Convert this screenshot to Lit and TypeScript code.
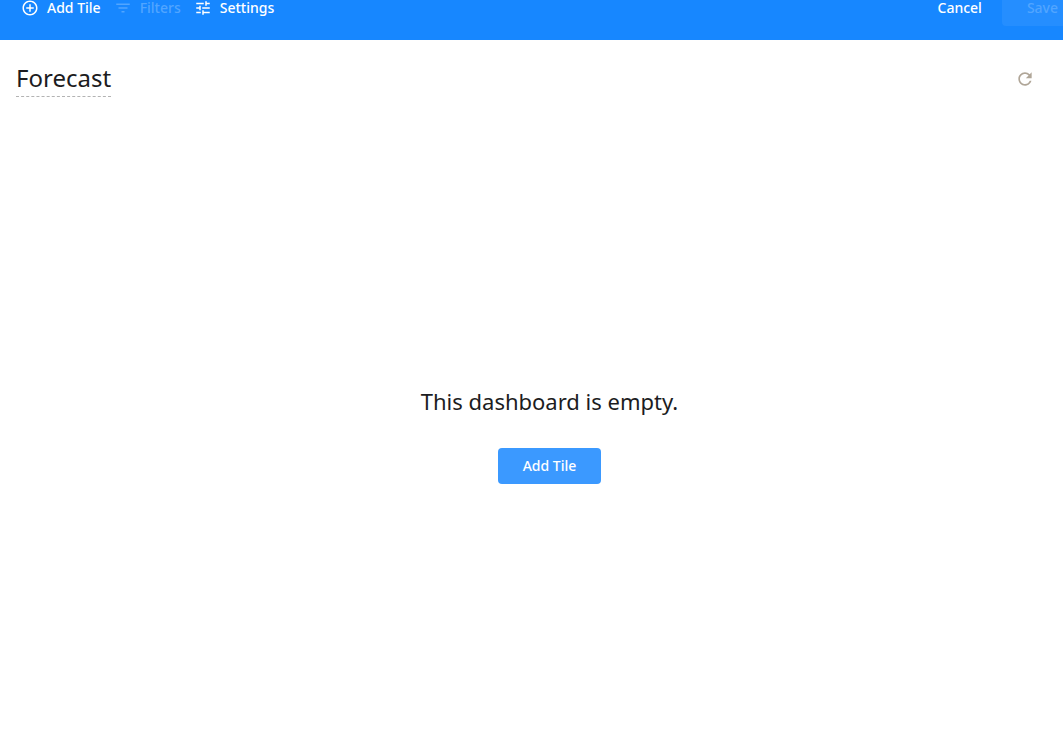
import { LitElement, html, css, svg } from "lit";
import { customElement } from "lit/decorators.js";

const icon = (d: string, size = 18) => html`
  <svg width=${size} height=${size} viewBox="0 0 24 24" fill="currentColor" aria-hidden="true">
    ${svg`<path d=${d}></path>`}
  </svg>`;

const ADD =
  "M13 7h-2v4H7v2h4v4h2v-4h4v-2h-4V7zm-1-5C6.48 2 2 6.48 2 12s4.48 10 10 10 10-4.48 10-10S17.52 2 12 2zm0 18c-4.41 0-8-3.59-8-8s3.59-8 8-8 8 3.59 8 8-3.59 8-8 8z";
const FILTER = "M10 18h4v-2h-4v2zM3 6v2h18V6H3zm3 7h12v-2H6v2z";
const TUNE =
  "M3 17v2h6v-2H3zM3 5v2h10V5H3zm10 16v-2h8v-2h-8v-2h-2v6h2zM7 9v2H3v2h4v2h2V9H7zm14 4v-2H11v2h10zm-6-4h2V7h4V5h-4V3h-2v6z";
const REFRESH =
  "M17.65 6.35C16.2 4.9 14.21 4 12 4c-4.42 0-7.99 3.58-7.99 8s3.57 8 7.99 8c3.73 0 6.84-2.55 7.73-6h-2.08c-.82 2.33-3.04 4-5.65 4-3.31 0-6-2.69-6-6s2.69-6 6-6c1.66 0 3.14.69 4.22 1.78L13 11h7V4l-2.35 2.35z";

@customElement("app-root")
export class AppRoot extends LitElement {
  static styles = css`
    :host {
      display: block;
      height: 100vh;
      overflow: hidden;
      background: #fff;
      color: #262d33;
      font-family: "Noto Sans", "Open Sans", sans-serif;
    }
    .page {
      display: flex;
      flex-direction: column;
      box-sizing: border-box;
      width: calc(100% + 20px);
      height: 100%;
    }
    .toolbar {
      display: flex;
      flex: none;
      align-items: flex-end;
      justify-content: space-between;
      box-sizing: border-box;
      height: 40px;
      padding: 0 0 14px 21px;
      background: #1787ff;
    }
    .group {
      display: flex;
      align-items: center;
      gap: 13px;
    }
    .actions {
      gap: 20px;
    }
    button {
      display: flex;
      align-items: center;
      gap: 8px;
      height: 36px;
      padding: 0;
      border: 0;
      border-radius: 4px;
      background: none;
      color: #fff;
      font: 500 14px/16px "Noto Sans", "Open Sans", sans-serif;
      white-space: nowrap;
      cursor: pointer;
    }
    button:disabled {
      color: #51a5ff;
      cursor: default;
    }
    .save {
      padding: 0 25px;
      background: #258eff;
    }
    svg {
      display: block;
      flex: none;
    }
    .heading {
      display: flex;
      align-items: center;
      justify-content: space-between;
      padding: 20px 48px 0 16px;
    }
    h1 {
      margin: 0;
      border-bottom: 1px dashed #b3b3b3;
      color: #1c1c21;
      font-size: 24px;
      font-weight: 400;
      line-height: 36px;
    }
    .refresh {
      color: #b0a698;
    }
    .empty {
      display: flex;
      flex: 1;
      flex-direction: column;
      align-items: center;
      justify-content: center;
      gap: 31px;
      padding: 41px 0 0 16px;
    }
    .message {
      margin: 0;
      color: #1c1c21;
      font-size: 22px;
      line-height: 32px;
    }
    .primary {
      padding: 0 25px;
      background: #3b99ff;
    }
  `;

  render() {
    return html`
      <div class="page">
        <header class="toolbar">
          <div class="group">
            <button type="button">${icon(ADD)}Add Tile</button>
            <button type="button" disabled>${icon(FILTER)}Filters</button>
            <button type="button">${icon(TUNE)}Settings</button>
          </div>
          <div class="group actions">
            <button type="button">Cancel</button>
            <button class="save" type="button" disabled>Save</button>
          </div>
        </header>
        <div class="heading">
          <h1>Forecast</h1>
          <button class="refresh" type="button" aria-label="Refresh">${icon(REFRESH, 20)}</button>
        </div>
        <main class="empty">
          <p class="message">This dashboard is empty.</p>
          <button class="primary" type="button">Add Tile</button>
        </main>
      </div>
    `;
  }
}
